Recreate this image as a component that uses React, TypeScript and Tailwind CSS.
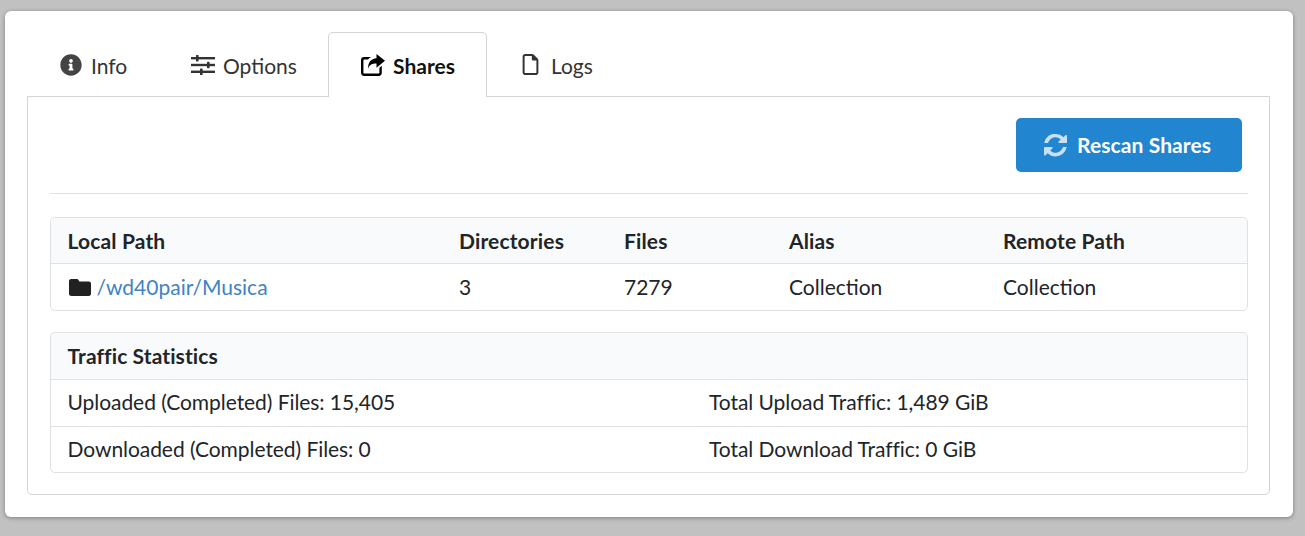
import { FaInfoCircle } from 'react-icons/fa';
import { FaRegFile } from 'react-icons/fa6';

function SlidersIcon({ className }: { className?: string }) {
  return (
    <svg viewBox="0 0 24 20" className={className} fill="currentColor">
      <rect x="0" y="2" width="24" height="2.4" />
      <rect x="5" y="0" width="2.6" height="6.4" rx="0.6" />
      <rect x="0" y="8.8" width="24" height="2.4" />
      <rect x="16" y="6.8" width="2.6" height="6.4" rx="0.6" />
      <rect x="0" y="15.6" width="24" height="2.4" />
      <rect x="9" y="13.6" width="2.6" height="6.4" rx="0.6" />
    </svg>
  );
}

function ShareIcon({ className }: { className?: string }) {
  return (
    <svg viewBox="0 0 24 22" className={className} fill="currentColor">
      <path d="M15.5 0 24 6.8l-8.5 6.9V9.6c-4.2 0-7 .9-8.3 5.2C6.6 8.6 10 4.6 15.5 4.2z" />
      <path d="M3 3h7.2c-1.3.7-2.4 1.5-3.2 2.4H3.6c-.7 0-1.2.5-1.2 1.2v11.8c0 .7.5 1.2 1.2 1.2h13.6c.7 0 1.2-.5 1.2-1.2v-4.6l2.4-2v7c0 2-1.2 3.2-3 3.2H3c-1.8 0-3-1.2-3-3.2V6.2C0 4.2 1.2 3 3 3z" />
    </svg>
  );
}

function RefreshIcon({ className }: { className?: string }) {
  return (
    <svg viewBox="0 0 1536 1536" className={className} fill="currentColor">
      <path d="M1511 896q0 5-1 7-64 268-268 434.500T764 1504q-146 0-282.500-55T238 1292l-129 129q-19 19-45 19t-45-19-19-45V928q0-26 19-45t45-19h448q26 0 45 19t19 45-19 45L420 1110q71 66 161 102t187 36q134 0 250-65t186-179q11-17 53-117 8-23 30-23h192q13 0 22.500 9.500t9.500 22.500zM1536 96v448q0 26-19 45t-45 19h-448q-26 0-45-19t-19-45 19-45l138-138q-148-137-349-137-134 0-250 65T332 468q-11 17-53 117-8 23-30 23H50q-13 0-22.500-9.500T18 576v-7q65-268 270-434.500T768 0q146 0 284 55.500T1297 212l130-129q19-19 45-19t45 19 19 45z" />
    </svg>
  );
}

function FolderIcon({ className }: { className?: string }) {
  return (
    <svg viewBox="0 0 22 17" className={className} fill="currentColor">
      <path d="M2.200 0h5.300c1.200 0 2 .6 2.400 1.600l.4 .9h9.500c1.300 0 2.200 .9 2.200 2.200v10.100c0 1.300-.9 2.200-2.200 2.200H2.200C.9 17 0 16.100 0 14.800V2.200C0 .9 .9 0 2.200 0z" />
    </svg>
  );
}

function Tab({ icon, label, active, className }: { icon: React.ReactNode; label: string; active?: boolean; className: string }) {
  return (
    <div
      className={
        'flex items-center h-[65px] ' +
        (active
          ? 'bg-white border border-[#d4d4d5] border-b-0 rounded-t-[5px] font-bold tracking-[0.05px] text-[#111] relative z-10 -mb-px '
          : 'text-[#333] ') +
        className
      }
    >
      {icon}
      <span className="pt-[2px]">{label}</span>
    </div>
  );
}

export default function App() {
  return (
    <div className="h-[536px] bg-[#c1c1c1] pt-[11px] pl-[5px] pr-[12px] font-['Lato',sans-serif] text-[21px] text-[#212529] overflow-hidden">
      <div className="bg-white rounded-[6px] h-[506px] pl-[22px] pr-[23px] pt-[21px] shadow-[0_1px_4px_rgba(0,0,0,0.35)]">
        <div className="flex h-[64px]">
          <Tab className="w-[133px] pl-[33px] gap-[9px]" label="Info" icon={<FaInfoCircle className="w-[22px] h-[22px] text-[#444]" />} />
          <Tab className="w-[168px] pl-[31px] gap-[8px]" label="Options" icon={<SlidersIcon className="w-[24px] h-[20px] text-[#333]" />} />
          <Tab className="w-[159px] pl-[32px] gap-[8px]" active label="Shares" icon={<ShareIcon className="w-[24px] h-[22px] text-black" />} />
          <Tab className="pl-[35px] gap-[12px]" label="Logs" icon={<FaRegFile className="w-[17px] h-[21px] text-[#333]" />} />
        </div>
        <div className="border border-[#d4d4d5] rounded-b-[5px] h-[399px] pl-[22px] pr-[21px] pt-[21px]">
          <div className="flex justify-end pr-[6px] pb-[21px] border-b border-[#dfe1e3]">
            <button className="w-[226px] h-[54px] pl-[28px] bg-[#2185d0] rounded-[5px] text-white font-bold tracking-[0.1px] flex items-center gap-[10px]">
              <RefreshIcon className="w-[23px] h-[23px] text-[#c9e0f3]" />
              <span>Rescan Shares</span>
            </button>
          </div>
          <div className="mt-[23px] border border-[#dfe1e3] rounded-[5px] h-[94px]">
            <div className="grid grid-cols-[391.500px_165px_165px_214px_1fr] h-[46px] items-center pl-[16.500px] bg-[#f9fafb] rounded-t-[5px] border-b border-[#dfe1e3] font-bold tracking-[0.15px]">
              <div>Local Path</div>
              <div>Directories</div>
              <div>Files</div>
              <div>Alias</div>
              <div>Remote Path</div>
            </div>
            <div className="grid grid-cols-[391.500px_165px_165px_214px_1fr] h-[46px] items-center pl-[16.500px]">
              <div className="flex items-center gap-[6px] pl-[1px]">
                <FolderIcon className="w-[22px] h-[17px] text-[#212121]" />
                <span className="text-[#4183c4]">/wd40pair/Musica</span>
              </div>
              <div>3</div>
              <div>7279</div>
              <div>Collection</div>
              <div>Collection</div>
            </div>
          </div>
          <div className="mt-[21px] border border-[#dfe1e3] rounded-[5px] h-[141px]">
            <div className="h-[47px] flex items-center pl-[16.500px] bg-[#f9fafb] rounded-t-[5px] border-b border-[#dfe1e3] font-bold tracking-[0.1px]">
              Traffic Statistics
            </div>
            <div className="grid grid-cols-[641.500px_1fr] h-[47px] items-center pl-[16.500px] pb-[2px] border-b border-[#dfe1e3] tracking-[-0.06px]">
              <div>Uploaded (Completed) Files: 15,405</div>
              <div>Total Upload Traffic: 1,489 GiB</div>
            </div>
            <div className="grid grid-cols-[641.500px_1fr] h-[46px] items-center pl-[16.500px] pb-[2px] tracking-[-0.06px]">
              <div>Downloaded (Completed) Files: 0</div>
              <div>Total Download Traffic: 0 GiB</div>
            </div>
          </div>
        </div>
      </div>
    </div>
  );
}
